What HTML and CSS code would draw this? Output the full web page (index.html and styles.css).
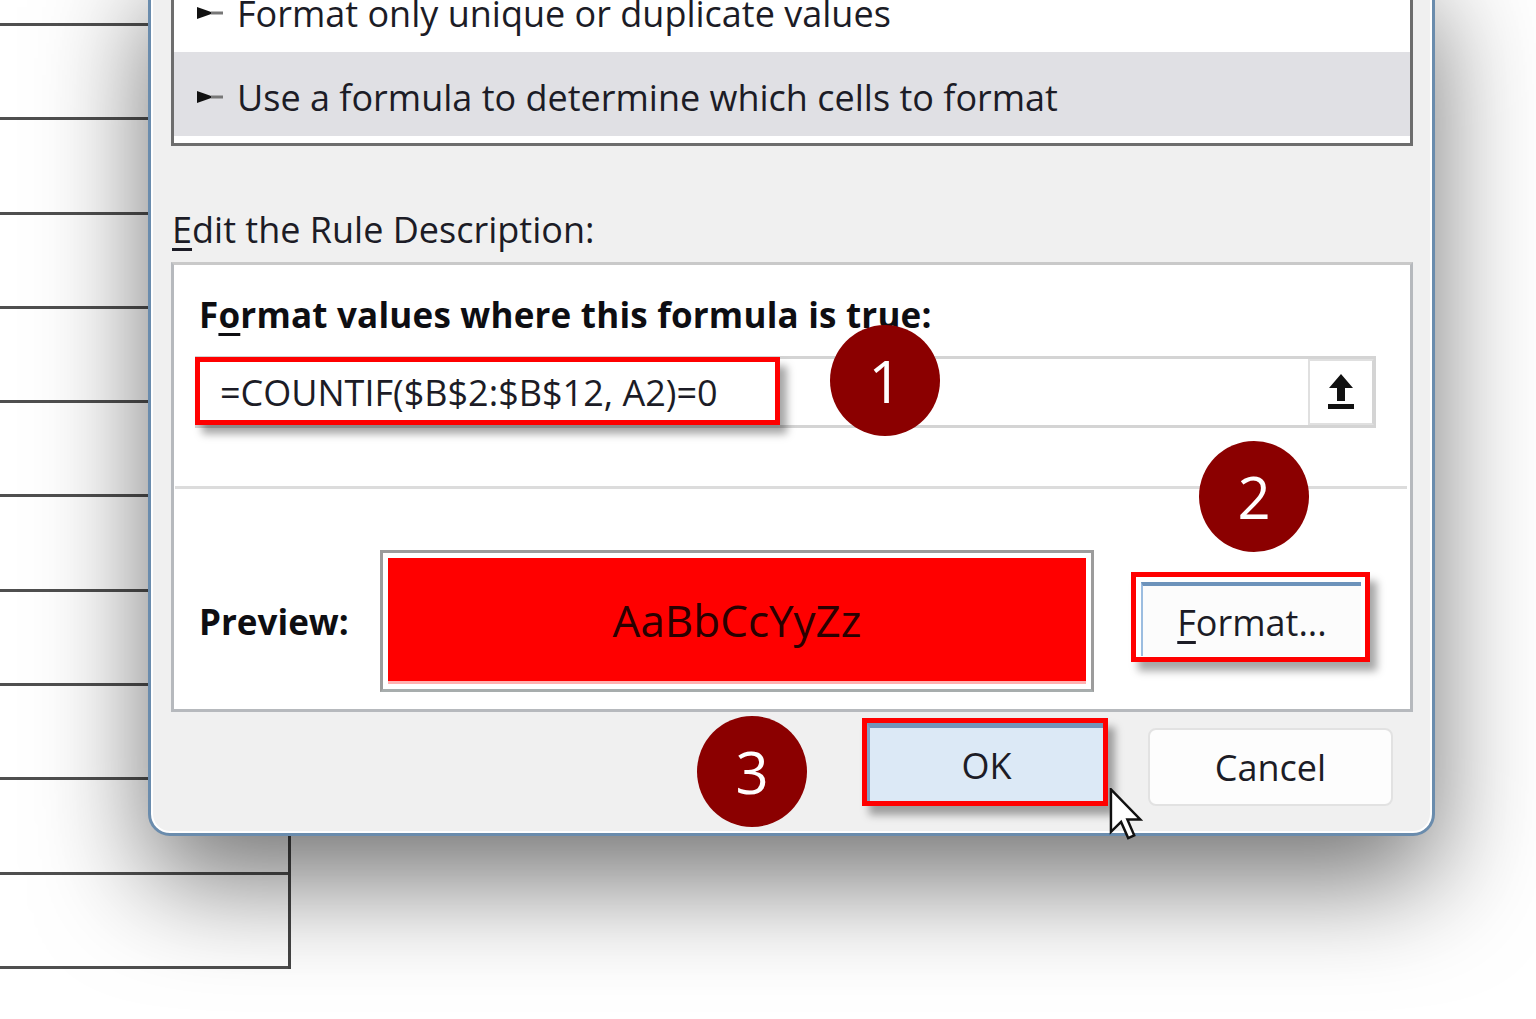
FILE: index.html
```html
<!DOCTYPE html>
<html>
<head>
<meta charset="utf-8">
<link rel="stylesheet" href="styles.css">
</head>
<body>
<div class="sheet">
  <div class="row first"></div>
  <div class="row"></div><div class="row"></div><div class="row"></div><div class="row"></div><div class="row"></div>
  <div class="row"></div><div class="row"></div><div class="row"></div><div class="row"></div><div class="row"></div>
</div>

<div class="dialog">
  <div class="listbox">
    <div class="item">
      <svg class="arrow" width="28" height="14" viewBox="0 0 28 14"><polygon points="0,1 17,7 0,13" fill="#111"/><rect x="14" y="5.5" width="12" height="3" fill="#777"/></svg>
      <span>Format only unique or duplicate values</span>
    </div>
    <div class="item sel">
      <svg class="arrow" width="28" height="14" viewBox="0 0 28 14"><polygon points="0,1 17,7 0,13" fill="#111"/><rect x="14" y="5.5" width="12" height="3" fill="#777"/></svg>
      <span>Use a formula to determine which cells to format</span>
    </div>
  </div>

  <div class="label"><u>E</u>dit the Rule Description:</div>

  <div class="group">
    <div class="g-title">F<u>o</u>rmat values where this formula is true:</div>
    <div class="input">
      <div class="formula">=COUNTIF($B$2:$B$12, A2)=0</div>
      <div class="upbtn">
        <svg width="30" height="38" viewBox="0 0 30 38"><polygon points="15,1 27,15 19,15 19,28 11,28 11,15 3,15" fill="#111"/><rect x="2" y="31" width="26" height="5" fill="#111"/></svg>
      </div>
      <div class="hl hl-formula"></div>
    </div>
    <div class="sep"></div>
    <div class="preview-row">
      <div class="pv-label">Preview:</div>
      <div class="pv-box"><div class="pv-inner">AaBbCcYyZz</div></div>
      <div class="hl hl-fmt"><div class="btn fmt"><u>F</u>ormat...</div></div>
    </div>
  </div>

  <div class="buttons">
    <div class="hl hl-ok"><div class="btn ok">OK</div></div>
    <div class="btn cancel">Cancel</div>
  </div>

  <div class="badge b1">1</div>
  <div class="badge b2">2</div>
  <div class="badge b3">3</div>

  <svg class="cursor" width="34" height="52" viewBox="0 0 12 19"><path d="M0.5,0.5 L0.5,16 L4.2,12.4 L6.8,18.3 L9,17.3 L6.5,11.5 L11.2,11.5 Z" fill="#fff" stroke="#111" stroke-width="0.9" stroke-linejoin="miter"/></svg>
</div>
</body>
</html>
```

FILE: styles.css
```css
html, body {
  margin: 0;
  padding: 0;
  background: #ffffff;
  overflow: hidden;
  width: 1536px;
  height: 1019px;
  font-family: "Open Sans", "Noto Sans", sans-serif;
}

.sheet {
  width: 291px;
  box-sizing: border-box;
  border-right: 3px solid #454545;
}
.row {
  height: 94.3px;
  box-sizing: border-box;
  border-bottom: 3px solid #4f4f4f;
}
.row.first { height: 26px; }

.dialog {
  position: absolute;
  left: 148px;
  top: -38px;
  width: 1287px;
  box-sizing: border-box;
  background: #f0f0f0;
  border: 3px solid #6a8cad;
  border-radius: 0 0 22px 22px;
  padding: 0 19px 27px 20px;
  box-shadow: inset 0 0 0 2px #ffffff, 0 45px 110px rgba(0, 0, 0, 0.55);
  color: #1c1c26;
  font-weight: 500;
}

.listbox {
  border: 3px solid #6d6d6d;
  background: #ffffff;
  padding-bottom: 7px;
}
.item {
  height: 84px;
  display: flex;
  align-items: center;
  padding: 6px 0 0 23px;
  box-sizing: border-box;
  font-size: 36px;
}
.item.sel { background: #e0e0e4; }
.arrow { margin-right: 12px; flex: none; }

.label {
  margin-top: 59px;
  height: 50px;
  line-height: 50px;
  font-size: 36px;
  padding-left: 1px;
}
u { text-decoration-thickness: 3px; text-underline-offset: 5px; }

.group {
  margin-top: 7px;
  background: #ffffff;
  border: 3px solid #b6b9bd;
  border-top-color: #c9c9c9;
  padding-bottom: 17px;
}
.g-title {
  margin-top: 25px;
  padding-left: 25px;
  height: 50px;
  line-height: 50px;
  font-size: 35px;
  font-weight: 700;
  color: #0e0e12;
  letter-spacing: 0.2px;
}

.input {
  position: relative;
  margin: 16px 34px 0 21px;
  height: 72px;
  box-sizing: border-box;
  border: 3px solid #d4d4d4;
  display: flex;
  align-items: center;
}
.formula {
  flex: 1;
  padding-left: 22px;
  font-size: 36px;
  color: #1c1c26;
}
.upbtn {
  width: 66px;
  height: 66px;
  box-sizing: border-box;
  border: 2px solid #e0e0e0;
  border-right-color: #d4d4d4;
  display: flex;
  align-items: center;
  justify-content: center;
  background: #ffffff;
  margin-right: -1px;
}

.hl {
  border: 5px solid #ff0000;
  box-shadow: 7px 9px 8px rgba(0, 0, 0, 0.35);
  box-sizing: border-box;
}
.hl-formula {
  position: absolute;
  left: -3px;
  top: -2px;
  width: 585px;
  height: 68px;
}

.sep {
  margin-top: 58px;
  height: 3px;
  background: #dcdcdc;
  margin-left: 1px;
  margin-right: 3px;
}

.preview-row {
  margin-top: 61px;
  height: 142px;
  display: flex;
  align-items: center;
  padding-left: 25px;
}
.pv-label {
  width: 181px;
  font-size: 35px;
  font-weight: 700;
  color: #0e0e12;
  flex: none;
}
.pv-box {
  width: 714px;
  height: 142px;
  box-sizing: border-box;
  border: 3px solid #9c9c9c;
  border-bottom-color: #a7adad;
  padding: 5px;
  background: #ffffff;
  flex: none;
}
.pv-inner {
  height: 100%;
  background: #ff0000;
  border-bottom: 3px solid #ffb0b0;
  box-sizing: border-box;
  display: flex;
  align-items: center;
  justify-content: center;
  font-size: 44px;
  font-weight: 400;
  color: #2a0000;
}

.hl-fmt {
  margin-left: 37px;
  margin-top: -8px;
  width: 239px;
  height: 90px;
  padding: 5px 4px 1px 5px;
  display: flex;
}

.btn {
  display: flex;
  align-items: center;
  justify-content: center;
  box-sizing: border-box;
  font-size: 36px;
  color: #1c1c26;
}
.btn.fmt {
  flex: 1;
  background: #fcfcfc;
  border-top: 4px solid #6d93bb;
  border-left: 2px solid #9cbde0;
  padding-top: 2px;
}

.buttons {
  display: flex;
  justify-content: flex-end;
  align-items: flex-end;
  margin-top: 6px;
  padding-right: 20px;
  gap: 40px;
}
.hl-ok {
  width: 246px;
  height: 88px;
  display: flex;
  padding: 0;
}
.btn.ok {
  flex: 1;
  background: #dce9f6;
  border-top: 5px solid #7395ba;
  border-left: 3px solid #7fa2c6;
  padding-top: 2px;
}
.btn.cancel {
  width: 245px;
  height: 78px;
  background: #fdfdfd;
  border: 2px solid #e2e2e2;
  border-radius: 8px;
}

.badge {
  position: absolute;
  width: 110px;
  height: 111px;
  border-radius: 50%;
  background: #8b0000;
  color: #ffffff;
  font-size: 58px;
  font-weight: 400;
  line-height: 111px;
  text-align: center;
}
.b1 { left: 679px; top: 360px; }
.b2 { left: 1048px; top: 476px; }
.b3 { left: 546px; top: 751px; }

.cursor {
  position: absolute;
  left: 958px;
  top: 823px;
}
```
